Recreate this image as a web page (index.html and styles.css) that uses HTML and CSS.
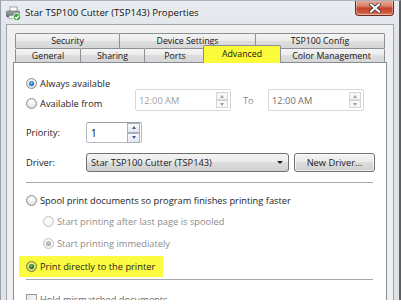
FILE: index.html
```html
<!DOCTYPE html>
<html>
<head>
<meta charset="utf-8">
<link rel="stylesheet" href="styles.css">
</head>
<body>
<div class="window">
  <div class="titlebar">
    <svg class="appicon" width="15" height="15" viewBox="0 0 15 15">
      <defs>
        <linearGradient id="pb" x1="0" y1="0" x2="0" y2="1">
          <stop offset="0" stop-color="#a9aeb5"/>
          <stop offset="1" stop-color="#5d636b"/>
        </linearGradient>
      </defs>
      <rect x="4" y="1" width="7" height="4.5" fill="#fff" stroke="#8a8f96" stroke-width="0.8"/>
      <rect x="0.5" y="5" width="13" height="6" rx="1.2" fill="url(#pb)" stroke="#4f555c" stroke-width="0.6"/>
      <rect x="3" y="9.5" width="8" height="3" fill="#f4f4f4" stroke="#8a8f96" stroke-width="0.6"/>
      <circle cx="11" cy="11" r="3.8" fill="#3aa63a" stroke="#fff" stroke-width="0.8"/>
      <path d="M9.1 11.1 L10.5 12.5 L12.9 9.6" fill="none" stroke="#fff" stroke-width="1.3"/>
    </svg>
    <span class="title">Star TSP100 Cutter (TSP143) Properties</span>
    <div class="close">
      <svg width="12" height="10" viewBox="0 0 12 10">
        <path d="M2 1.5 L10 8.5 M10 1.5 L2 8.5" stroke="#3b3b3b" stroke-width="3.6" stroke-linecap="square"/>
        <path d="M2 1.5 L10 8.5 M10 1.5 L2 8.5" stroke="#fff" stroke-width="2" stroke-linecap="square"/>
      </svg>
    </div>
  </div>
  <div class="client">
    <div class="tabs">
      <div class="tabrow row1">
        <div class="tab">Security</div>
        <div class="tab">Device Settings</div>
        <div class="tab">TSP100 Config</div>
      </div>
      <div class="tabrow row2">
        <div class="tab">General</div>
        <div class="tab">Sharing</div>
        <div class="tab">Ports</div>
        <div class="tab selected">Advanced</div>
        <div class="tab">Color Management</div>
      </div>
    </div>
    <div class="panel">
      <div class="row r-always">
        <span class="radio on"></span><span class="lbl">Always available</span>
      </div>
      <div class="row r-from">
        <div class="labcol wide"><span class="radio"></span><span class="lbl">Available from</span></div>
        <div class="timebox dis1">
          <span>12:00 AM</span>
          <div class="spin dspin"><span class="sb"><i class="up"></i></span><span class="sb"><i class="dn"></i></span></div>
        </div>
        <span class="to">To</span>
        <div class="timebox dis2">
          <span>12:00 AM</span>
          <div class="spin dspin"><span class="sb"><i class="up"></i></span><span class="sb"><i class="dn"></i></span></div>
        </div>
      </div>
      <div class="row r-prio">
        <span class="labcol">Priority:</span>
        <div class="prio">
          <span>1</span>
          <div class="spin espin"><span class="sb"><i class="up"></i></span><span class="sb"><i class="dn"></i></span></div>
        </div>
      </div>
      <div class="row r-driver">
        <span class="labcol">Driver:</span>
        <div class="combo"><span>Star TSP100 Cutter (TSP143)</span><i class="arrow"></i></div>
        <div class="btn">New Driver...</div>
      </div>
      <div class="sep s1"></div>
      <div class="row r-spool">
        <span class="radio"></span><span class="lbl">Spool print documents so program finishes printing faster</span>
      </div>
      <div class="row r-sub1 sub">
        <span class="radio dis"></span><span class="lbl gray">Start printing after last page is spooled</span>
      </div>
      <div class="row r-sub2 sub">
        <span class="radio dis ondis"></span><span class="lbl gray">Start printing immediately</span>
      </div>
      <div class="row r-direct">
        <div class="hl"><span class="radio hlr on"></span><span class="lbl">Print directly to the printer</span></div>
      </div>
      <div class="sep s2"></div>
      <div class="row r-hold">
        <span class="check"></span><span class="lbl dim">Hold mismatched documents</span>
      </div>
    </div>
  </div>
</div>
</body>
</html>
```

FILE: styles.css
```css
html, body {
  margin: 0;
  padding: 0;
  background: #ffffff;
}
body {
  font-family: "Open Sans", "Noto Sans", sans-serif;
  font-size: 9.3px;
  color: #1b1b1b;
}
.window {
  width: 401px;
  height: 300px;
  box-sizing: border-box;
  overflow: hidden;
  border-left: 1px solid #9aa0a7;
  border-top: 1px solid #aab0b6;
  border-right: 2px solid #5d5f62;
  padding: 0 5px 0 5px;
  background: linear-gradient(#e9ecf0, #dfe3e8 40px, #dfe3e8);
}
.titlebar {
  height: 23px;
  display: flex;
  align-items: flex-start;
}
.appicon {
  margin-top: 5px;
  flex: none;
}
.title {
  margin-left: 4px;
  margin-top: 5px;
  font-size: 9.6px;
  color: #111;
  text-shadow: 0 0 4px #fff;
  flex: 1;
}
.close {
  width: 39px;
  height: 16px;
  margin-top: -1px;
  border: 1px solid #6b2a20;
  border-top: none;
  border-radius: 0 0 4px 4px;
  box-sizing: border-box;
  background: linear-gradient(#eab3a4, #d87f68 40%, #c2412a 55%, #cf5a3e 85%, #e09070);
  display: flex;
  align-items: center;
  justify-content: center;
  box-shadow: inset 0 0 0 1px rgba(255,255,255,0.35);
}
.client {
  height: 300px;
  border: 1px solid #a0a6ad;
  background: #f0f0f0;
  padding: 8px 6px 0 6px;
}
.tabs {
  padding-left: 2px;
}
.tabrow {
  display: flex;
}
.tab {
  box-sizing: border-box;
  border: 1px solid #8c8f96;
  border-bottom: none;
  border-radius: 2px 2px 0 0;
  background: linear-gradient(#f4f4f4, #ebebeb 50%, #dedede 50%, #d6d6d6);
  display: flex;
  align-items: center;
  justify-content: center;
  margin-left: -1px;
  color: #151515;
  font-size: 8.8px;
}
.tab:first-child { margin-left: 0; }
.row1 .tab { height: 15px; }
.row2 .tab { height: 14px; }
.row1 .tab:nth-child(1) { width: 105px; }
.row1 .tab:nth-child(2) { width: 137px; }
.row1 .tab:nth-child(3) { width: 130px; }
.row2 .tab:nth-child(1) { width: 66px; }
.row2 .tab:nth-child(2) { width: 65px; }
.row2 .tab:nth-child(3) { width: 62px; }
.row2 .tab:nth-child(4) { width: 74px; }
.row2 .tab:nth-child(5) { width: 107px; }
.tab.selected {
  position: relative;
  z-index: 2;
  height: 18px;
  margin: -3px -2px -1px -3px;
  width: 78px !important;
  background: #fbfb3c;
  border-color: #8c8f96;
  align-items: flex-start;
  padding-top: 2px;
}
.panel {
  border: 1px solid #898c95;
  background: #ffffff;
  height: 260px;
  padding: 0 13px 0 12px;
  display: flex;
  flex-direction: column;
}
.row {
  display: flex;
  align-items: center;
  flex: none;
}
.lbl {
  margin-left: 3px;
  white-space: nowrap;
}
.gray { color: #8c8c8c; }
.dim { color: #6a6a6a; }
.radio {
  width: 11px;
  height: 11px;
  box-sizing: border-box;
  border-radius: 50%;
  border: 1px solid #8e8f8f;
  background: radial-gradient(circle at 50% 35%, #ffffff 0, #f0f0f0 40%, #cfcfcf 100%);
  display: flex;
  align-items: center;
  justify-content: center;
  flex: none;
}
.radio.on::after {
  content: "";
  width: 5px;
  height: 5px;
  border-radius: 50%;
  background: radial-gradient(circle at 45% 40%, #8fd3ff 0, #1f7fcf 45%, #0c3f7a 100%);
}
.radio.dis {
  border-color: #c2c2c2;
  background: radial-gradient(circle at 50% 35%, #ffffff, #ececec);
}
.radio.ondis::after {
  content: "";
  width: 5px;
  height: 5px;
  border-radius: 50%;
  background: radial-gradient(circle at 45% 40%, #d0d0d0, #8a8a8a);
}
.radio.hlr {
  border-color: #6f7a30;
  background: radial-gradient(circle at 50% 35%, #f6f6a0, #c8c860);
}
.radio.hlr::after {
  background: radial-gradient(circle at 45% 40%, #7fcf60 0, #1f7a2a 50%, #0e3f16 100%);
}
.check {
  width: 11px;
  height: 11px;
  box-sizing: border-box;
  border: 1px solid #9a9a9a;
  background: linear-gradient(135deg, #e6e6e6, #ffffff);
  flex: none;
}
.r-always { height: 16px; margin-top: 12px; }
.r-from { height: 22px; margin-top: -2px; }
.r-prio { height: 21px; margin-top: 11px; }
.r-driver { height: 19px; margin-top: 10px; }
.s1 { margin-top: 10px; }
.r-spool { height: 16px; margin-top: 9px; }
.r-sub1 { height: 16px; margin-top: 5px; }
.r-sub2 { height: 16px; margin-top: 6px; }
.r-direct { height: 21px; margin-top: 5px; }
.s2 { margin-top: 2px; }
.r-hold { height: 16px; margin-top: 11px; }
.sub { padding-left: 17px; }
.labcol {
  width: 60px;
  flex: none;
  white-space: nowrap;
}
.labcol.wide {
  width: 109px;
  display: flex;
  align-items: center;
  margin-top: 6px;
}
.timebox {
  width: 96px;
  height: 22px;
  box-sizing: border-box;
  border: 1px solid #d5d9de;
  border-radius: 2px;
  background: #fff;
  display: flex;
  align-items: center;
  justify-content: space-between;
  padding: 0 2px 0 3px;
  flex: none;
}
.dis1 { color: #a2a2a2; }
.dis2 { color: #707070; }
.to {
  width: 37px;
  box-sizing: border-box;
  padding-left: 12px;
  color: #8a8a8a;
  flex: none;
}
.spin {
  display: flex;
  flex-direction: column;
}
.sb {
  width: 12px;
  height: 8px;
  box-sizing: border-box;
  display: flex;
  align-items: center;
  justify-content: center;
}
.dspin .sb {
  border: 1px solid #d2d5d9;
  background: #f7f7f7;
}
.espin .sb {
  width: 13px;
  height: 10px;
  border: 1px solid #a7b0bd;
  background: linear-gradient(#f8f9fb, #e3e7ee);
}
.up, .dn {
  width: 0;
  height: 0;
  border-left: 2.5px solid transparent;
  border-right: 2.5px solid transparent;
}
.up { border-bottom: 3px solid #a0a0a0; }
.dn { border-top: 3px solid #a0a0a0; }
.espin .up { border-bottom-color: #3d5f8f; }
.espin .dn { border-top-color: #3d5f8f; }
.prio {
  width: 56px;
  height: 21px;
  box-sizing: border-box;
  border: 1px solid #b5b9c0;
  border-top-color: #9aa0a8;
  border-radius: 2px;
  background: #fff;
  display: flex;
  align-items: center;
  justify-content: space-between;
  padding: 0 1px 0 4px;
  color: #000;
  font-size: 10px;
}
.combo {
  width: 203px;
  height: 19px;
  box-sizing: border-box;
  border: 1px solid #717171;
  border-radius: 3px;
  background: linear-gradient(#f3f3f3, #ebebeb 45%, #dddddd 50%, #d0d0d0);
  display: flex;
  align-items: center;
  justify-content: space-between;
  padding: 0 5px 0 4px;
  flex: none;
}
.arrow {
  width: 0;
  height: 0;
  border-left: 3px solid transparent;
  border-right: 3px solid transparent;
  border-top: 3.5px solid #222;
}
.btn {
  width: 81px;
  height: 19px;
  margin-left: 5px;
  box-sizing: border-box;
  border: 1px solid #707070;
  border-radius: 3px;
  background: linear-gradient(#f3f3f3, #ebebeb 45%, #dddddd 50%, #d0d0d0);
  box-shadow: inset 0 0 0 1px rgba(255,255,255,0.7);
  display: flex;
  align-items: center;
  justify-content: center;
  flex: none;
}
.sep {
  height: 1px;
  background: #a9a9a9;
  flex: none;
}
.hl {
  display: flex;
  align-items: center;
  height: 21px;
  width: 144px;
  box-sizing: border-box;
  margin-left: -7px;
  padding-left: 7px;
  background: #fbfb42;
}
```
